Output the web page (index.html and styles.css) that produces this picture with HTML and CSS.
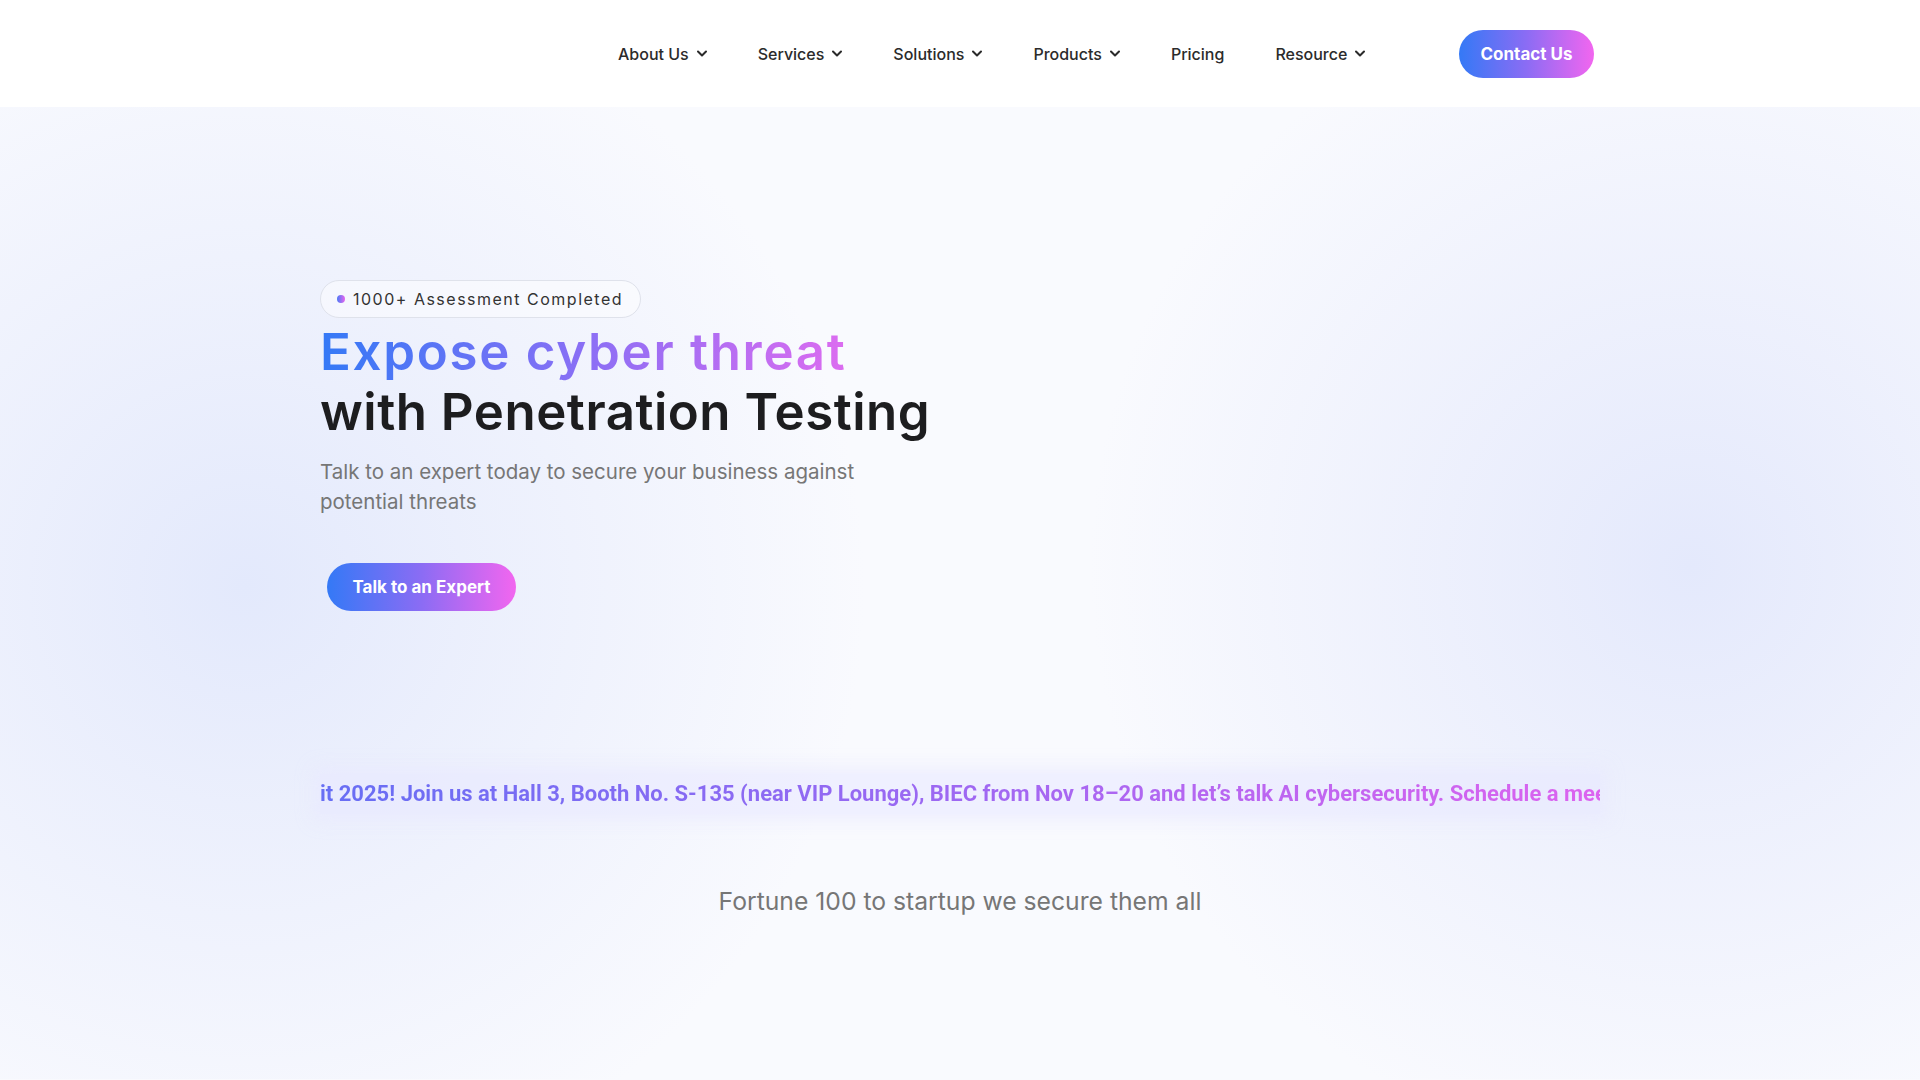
FILE: index.html
```html
<!DOCTYPE html>
<html lang="en">

<head>
    <meta charset="UTF-8">
    <meta name="viewport" content="width=device-width, initial-scale=1.0">
    <title>Penetration Testing</title>
    <link rel="stylesheet" href="styles.css">
</head>

<body>
    <!-- Header -->
    <header class="site-header">
        <div class="container nav-inner">
            <a href="#" class="logo" aria-label="Home"></a>
            <nav class="main-nav">
                <ul class="nav-list">
                    <li class="nav-item">About Us
                        <svg class="chevron" viewBox="0 0 10 6"><path d="M1 1l4 4 4-4"/></svg>
                    </li>
                    <li class="nav-item">Services
                        <svg class="chevron" viewBox="0 0 10 6"><path d="M1 1l4 4 4-4"/></svg>
                    </li>
                    <li class="nav-item">Solutions
                        <svg class="chevron" viewBox="0 0 10 6"><path d="M1 1l4 4 4-4"/></svg>
                    </li>
                    <li class="nav-item">Products
                        <svg class="chevron" viewBox="0 0 10 6"><path d="M1 1l4 4 4-4"/></svg>
                    </li>
                    <li class="nav-item">Pricing</li>
                    <li class="nav-item">Resource
                        <svg class="chevron" viewBox="0 0 10 6"><path d="M1 1l4 4 4-4"/></svg>
                    </li>
                </ul>
            </nav>
            <a href="#" class="btn-gradient contact-button">Contact Us</a>
        </div>
    </header>

    <!-- Hero -->
    <main class="hero">
        <div class="container hero-inner">
            <span class="badge"><span class="badge-dot"></span>1000+ Assessment Completed</span>
            <h1 class="hero-title">
                <span class="gradient-text">Expose cyber threat</span>
                with Penetration Testing
            </h1>
            <p class="hero-text">Talk to an expert today to secure your business against potential threats</p>
            <a href="#" class="btn-gradient hero-button">Talk to an Expert</a>
        </div>

        <div class="container marquee">
            <div class="marquee-track">it 2025! Join us at Hall 3, Booth No. S-135 (near VIP Lounge), BIEC from Nov 18–20 and let’s talk AI cybersecurity. Schedule a meeting with our team today!</div>
        </div>

        <p class="clients-title">Fortune 100 to startup we secure them all</p>
    </main>
</body>

</html>
```

FILE: styles.css
```css
body {
    font-family: Inter, "Noto Sans", sans-serif;
    margin: 0;
    padding: 0;
    box-sizing: border-box;
    background-color: #f9fafe;
    color: #222;
    overflow-x: hidden;
}

a {
    text-decoration: none;
}

.container {
    width: 1280px;
    margin: 0 auto;
}

/* Header */
.site-header {
    background-color: #fff;
    height: 107px;
}

.nav-inner {
    display: flex;
    align-items: center;
    height: 100%;
}

.logo {
    width: 160px;
    height: 40px;
}

.main-nav {
    margin-left: 138px;
}

.nav-list {
    display: flex;
    gap: 51px;
    list-style: none;
    margin: 0;
    padding: 0;
}

.nav-item {
    display: flex;
    align-items: center;
    gap: 8px;
    font-size: 16px;
    font-weight: 500;
    color: #2b2b2b;
    cursor: pointer;
}

.chevron {
    width: 10px;
    height: 7px;
    fill: none;
    stroke: #2b2b2b;
    stroke-width: 2;
    stroke-linecap: round;
    stroke-linejoin: round;
}

.btn-gradient {
    display: inline-flex;
    align-items: center;
    justify-content: center;
    height: 48px;
    border-radius: 24px;
    background: linear-gradient(90deg, #3479f6 0%, #8b6cf4 50%, #f266ef 100%);
    color: #fff;
    font-size: 17px;
    font-weight: 700;
}

.contact-button {
    width: 135px;
    margin-left: auto;
    margin-right: 6px;
}

/* Hero */
.hero {
    padding-top: 173px;
    padding-bottom: 160px;
    background:
        radial-gradient(circle 620px at 245px 480px, #e3e9fc 0%, rgba(230, 235, 252, 0.7) 38%, rgba(249, 250, 254, 0) 100%),
        radial-gradient(circle 600px at 1690px 460px, #e4e9fc 0%, rgba(231, 235, 252, 0.7) 38%, rgba(249, 250, 254, 0) 100%),
        #f9fafe;
}

.hero-inner {
    display: flex;
    flex-direction: column;
    align-items: flex-start;
}

.badge {
    display: inline-flex;
    align-items: center;
    gap: 8px;
    height: 36px;
    padding: 0 17px 0 16px;
    border: 1px solid #dfe2eb;
    border-radius: 20px;
    background-color: rgba(255, 255, 255, 0.45);
    font-size: 16px;
    letter-spacing: 1.5px;
    color: #333;
}

.badge-dot {
    width: 8px;
    height: 8px;
    border-radius: 50%;
    background: linear-gradient(90deg, #4a79f6, #e866ef);
}

.hero-title {
    margin: 4px 0 0;
    font-size: 51px;
    line-height: 60px;
    font-weight: 600;
    letter-spacing: 0.5px;
    color: #1d1d1f;
}

.gradient-text {
    display: block;
    width: fit-content;
    letter-spacing: 1.7px;
    background: linear-gradient(90deg, #3479f6 0%, #8a6ff5 50%, #dc6cf0 100%);
    -webkit-background-clip: text;
    background-clip: text;
    color: transparent;
}

.hero-text {
    max-width: 560px;
    margin: 15px 0 0;
    font-size: 20.5px;
    line-height: 30px;
    color: #767676;
}

.hero-button {
    width: 189px;
    margin: 46px 0 0 7px;
}

/* Event strip */
.marquee {
    margin-top: 163px;
    height: 40px;
    overflow: hidden;
    background-color: rgba(232, 232, 255, 0.55);
    box-shadow: 0 0 18px 6px rgba(232, 232, 255, 0.7);
}

.marquee-track {
    white-space: nowrap;
    font-family: Roboto, "Liberation Sans", sans-serif;
    font-size: 22px;
    font-weight: 700;
    line-height: 40px;
    width: 1280px;
    background: linear-gradient(90deg, #676ef4 0%, #9e68f2 50%, #dc63ef 100%);
    -webkit-background-clip: text;
    background-clip: text;
    color: transparent;
}

.clients-title {
    margin: 69px 0 0;
    text-align: center;
    font-size: 24.7px;
    line-height: 36px;
    color: #767676;
}
```
